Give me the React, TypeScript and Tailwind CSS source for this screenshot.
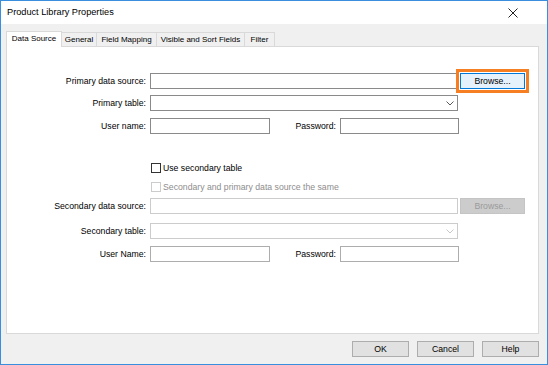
import React from 'react';

const font = "font-['Liberation_Sans',Arial,sans-serif]";

function Chevron({ disabled }: { disabled?: boolean }) {
  return (
    <svg width="8" height="5" viewBox="0 0 8 5" className="shrink-0">
      <path d="M0.5 0.5 L4 4 L7.5 0.5" fill="none" stroke={disabled ? '#c8c8c8' : '#5a5a5a'} strokeWidth="1" />
    </svg>
  );
}

function TextBox({ className = '', disabled }: { className?: string; disabled?: boolean }) {
  return (
    <div
      className={`h-[16px] bg-white border ${disabled ? 'border-[#cccccc]' : 'border-[#8a8a8a]'} ${className}`}
    />
  );
}

function Combo({ disabled }: { disabled?: boolean }) {
  return (
    <div
      className={`w-[308px] h-[16px] bg-white border ${disabled ? 'border-[#cccccc]' : 'border-[#8a8a8a]'} flex items-center justify-end pr-[3px]`}
    >
      <Chevron disabled={disabled} />
    </div>
  );
}

function Label({ children }: { children: React.ReactNode }) {
  return <div className="w-[139px] text-right leading-none whitespace-nowrap">{children}</div>;
}

function CheckBox({ label, disabled }: { label: string; disabled?: boolean }) {
  return (
    <div className="flex items-center h-[10px] pl-[144px]">
      <div className={`w-[10px] h-[10px] bg-white border ${disabled ? 'border-[#cccccc]' : 'border-[#333333]'}`} />
      <span className={`ml-[2px] leading-none whitespace-nowrap ${disabled ? 'text-[#8d8d8d]' : ''}`}>{label}</span>
    </div>
  );
}

const tabs = [
  { name: 'Data Source', w: 'w-[56px]' },
  { name: 'General', w: 'w-[35px]' },
  { name: 'Field Mapping', w: 'w-[60px]' },
  { name: 'Visible and Sort Fields', w: 'w-[88px]' },
  { name: 'Filter', w: 'w-[30px]' },
];

export default function App() {
  return (
    <div className={`w-[548px] h-[365px] border border-[#3a8ede] bg-[#f0f0f0] flex flex-col text-black ${font}`}>
      {/* title bar */}
      <div className="h-[23px] bg-white flex items-center justify-between pl-[6px] pr-[29px] shrink-0">
        <span className="text-[9.2px] leading-none">Product Library Properties</span>
        <svg width="10" height="10" viewBox="0 0 10 10">
          <path d="M0.5 0.5 L9.5 9.5 M9.5 0.5 L0.5 9.5" stroke="#222" strokeWidth="1" />
        </svg>
      </div>

      <div className="flex flex-col pl-[5px]">
        {/* tabs */}
        <div className="h-[22px] flex items-end text-[8px]">
          {tabs.map((t, i) =>
            i === 0 ? (
              <div
                key={t.name}
                className={`${t.w} h-[16px] -mb-px z-10 bg-white border border-b-0 border-[#d9d9d9] flex items-start justify-center pt-[3px] leading-none whitespace-nowrap`}
              >
                {t.name}
              </div>
            ) : (
              <div
                key={t.name}
                className={`${t.w} h-[14px] bg-[#f0f0f0] border border-b-0 border-l-0 border-[#d9d9d9] flex items-start justify-center pt-[3px] leading-none whitespace-nowrap`}
              >
                {t.name}
              </div>
            ),
          )}
        </div>

        {/* panel */}
        <div className="w-[533px] h-[288px] bg-white border border-[#d9d9d9] flex flex-col pt-[26px] text-[8.7px]">
          <div className="flex items-center h-[16px]">
            <Label>Primary data source:</Label>
            <TextBox className="ml-[4px] w-[308px]" />
            <div className="relative ml-[2px]">
              <div className="w-[65px] h-[16px] bg-[#e5f1fb] border border-[#0078d7] flex items-center justify-center leading-none">
                Browse...
              </div>
              <div className="absolute -inset-[4px] border-[3px] border-[#f57f22]" />
            </div>
          </div>

          <div className="flex items-center h-[16px] mt-[6px]">
            <Label>Primary table:</Label>
            <div className="ml-[4px]">
              <Combo />
            </div>
          </div>

          <div className="flex items-center h-[16px] mt-[7px]">
            <Label>User name:</Label>
            <TextBox className="ml-[4px] w-[120px]" />
            <div className="w-[66px] text-right leading-none">Password:</div>
            <TextBox className="ml-[4px] w-[119px]" />
          </div>

          <div className="mt-[29px]">
            <CheckBox label="Use secondary table" />
          </div>
          <div className="mt-[9px]">
            <CheckBox label="Secondary and primary data source the same" disabled />
          </div>

          <div className="flex items-center h-[16px] mt-[6px]">
            <Label>Secondary data source:</Label>
            <TextBox className="ml-[4px] w-[308px]" disabled />
            <div className="ml-[2px] w-[65px] h-[16px] bg-[#cccccc] border border-[#c4c4c4] text-[#9a9a9a] flex items-center justify-center leading-none">
              Browse...
            </div>
          </div>

          <div className="flex items-center h-[16px] mt-[9px]">
            <Label>Secondary table:</Label>
            <div className="ml-[4px]">
              <Combo disabled />
            </div>
          </div>

          <div className="flex items-center h-[16px] mt-[7px]">
            <Label>User Name:</Label>
            <TextBox className="ml-[4px] w-[120px] !border-[#adadad]" />
            <div className="w-[66px] text-right leading-none">Password:</div>
            <TextBox className="ml-[4px] w-[119px] !border-[#adadad]" />
          </div>
        </div>

        {/* buttons */}
        <div className="w-[533px] flex justify-end gap-[8px] mt-[7px] text-[8.7px]">
          {['OK', 'Cancel', 'Help'].map((b) => (
            <div
              key={b}
              className="w-[57px] h-[16px] bg-[#e1e1e1] border border-[#adadad] flex items-center justify-center leading-none"
            >
              {b}
            </div>
          ))}
        </div>
      </div>
    </div>
  );
}
